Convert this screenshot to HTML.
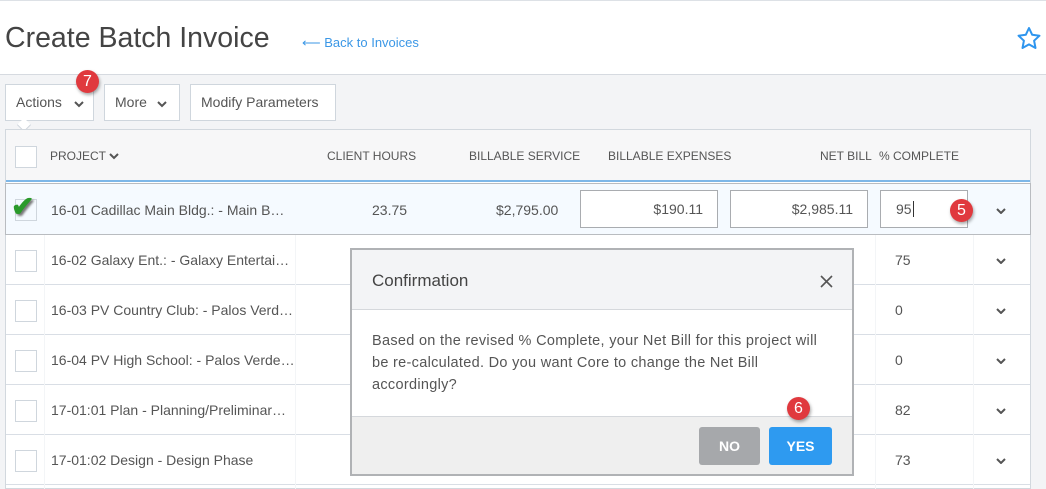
<!DOCTYPE html>
<html><head><meta charset="utf-8"><style>
*{box-sizing:border-box;margin:0;padding:0}
body{width:1046px;height:489px;overflow:hidden;background:#f3f4f6;font-family:"Liberation Sans",sans-serif;color:#555;position:relative}
.a{position:absolute}
.hdr{left:0;top:0;width:1046px;height:75px;background:#fff;border-top:1px solid #dde1e6;border-bottom:1px solid #d6dae0}
.btn{position:absolute;top:84px;height:37px;background:#fff;border:1px solid #cfd6dd;font-size:14px;color:#555;line-height:35px;padding-left:10px}
.tbl{left:5px;top:129px;width:1026px;height:360px;background:#fff;border:1px solid #d2d8de}
.th{font-size:12px;color:#555;top:149px}
.cb{position:absolute;left:15px;width:22px;height:22px;border:1px solid #cfd6dd;background:#fff}
.row{position:absolute;left:6px;width:1024px;height:50px;border-bottom:1px solid #d9dee5}
.txt{font-size:14px;color:#555}
.chev{position:absolute;width:10px;height:6px}
.badge{position:absolute;width:23px;height:23px;border-radius:50%;background:#e0393e;color:#fff;font-size:16px;text-align:center;line-height:23px;box-shadow:1px 2px 3px rgba(0,0,0,.35)}
.inp{position:absolute;top:190px;height:38px;background:#fff;border:1px solid #a9acb0;font-size:14px;line-height:36px;text-align:right;padding-right:14px;color:#555}
</style></head><body>
<div class="a hdr"></div>
<div class="a" style="left:5px;top:22px;font-size:28.5px;color:#444">Create Batch Invoice</div>
<div class="a" style="left:302px;top:35px;font-size:13px;color:#3b97e6">⟵ Back to Invoices</div>
<svg class="a" style="left:1016px;top:26px" width="26" height="25" viewBox="0 0 26 25"><path d="M13 2l3.2 6.8 7.3.9-5.4 5 1.4 7.3L13 18.4 6.5 22l1.4-7.3-5.4-5 7.3-.9z" fill="none" stroke="#2e95ee" stroke-width="2" stroke-linejoin="round"/></svg>

<div class="btn" style="left:5px;width:89px">Actions <svg style="position:absolute;left:68px;top:16px" width="10" height="7" viewBox="0 0 10 7"><path d="M1 1l4 4 4-4" fill="none" stroke="#555" stroke-width="2"/></svg></div>
<div class="a" style="left:19px;top:120px;width:10px;height:10px;background:#fff;border-right:1px solid #cfd6dd;border-bottom:1px solid #cfd6dd;transform:rotate(45deg)"></div>
<div class="btn" style="left:104px;width:76px">More <svg style="position:absolute;left:52px;top:16px" width="10" height="7" viewBox="0 0 10 7"><path d="M1 1l4 4 4-4" fill="none" stroke="#555" stroke-width="2"/></svg></div>
<div class="btn" style="left:190px;width:146px">Modify Parameters</div>
<div class="badge" style="left:76px;top:70px">7</div>

<div class="a tbl"></div>
<div class="a" style="left:6px;top:130px;width:1024px;height:52px;background:#f7f7f8;border-bottom:2px solid #7db7e8"></div>
<div class="cb" style="top:146px"></div>
<div class="a th" style="left:50px">PROJECT</div>
<svg class="a" style="left:109px;top:153px" width="10" height="7" viewBox="0 0 10 7"><path d="M1 1l4 4 4-4" fill="none" stroke="#555" stroke-width="2"/></svg>
<div class="a th" style="left:327px">CLIENT HOURS</div>
<div class="a th" style="left:469px">BILLABLE SERVICE</div>
<div class="a th" style="left:608px">BILLABLE EXPENSES</div>
<div class="a th" style="left:820px">NET BILL</div>
<div class="a th" style="left:879px">% COMPLETE</div>

<div class="a" style="left:5px;top:183px;width:1026px;height:52px;background:#f5faff;border:1px solid #b9bcc0"></div>
<div class="cb" style="top:199px;background:#f5faff"></div>
<div class="a" style="left:11px;top:190px;font-size:28px;color:#2a9a2a;text-shadow:2px 2px 2px #777;font-weight:bold">✔</div>
<div class="a txt" style="left:51px;top:202px">16-01 Cadillac Main Bldg.: - Main B…</div>
<div class="a txt" style="left:372px;top:202px">23.75</div>
<div class="a txt" style="left:496px;top:202px">$2,795.00</div>
<div class="inp" style="left:580px;width:138px">$190.11</div>
<div class="inp" style="left:730px;width:138px">$2,985.11</div>
<div class="inp" style="left:880px;width:88px;text-align:left;padding-left:15px">95<span style="border-left:1px solid #333;margin-left:1px"></span></div>
<div class="badge" style="left:950px;top:199px">5</div>
<svg class="chev" style="left:996px;top:208px" viewBox="0 0 10 6"><path d="M1 1l4 4 4-4" fill="none" stroke="#555" stroke-width="2"/></svg>

<div class="row" style="top:235px"></div>
<div class="row" style="top:285px"></div>
<div class="row" style="top:335px"></div>
<div class="row" style="top:385px"></div>
<div class="row" style="top:435px"></div>
<div class="a" style="left:44px;top:235px;width:1px;height:254px;background:#f3f5f7"></div>
<div class="a" style="left:295px;top:235px;width:1px;height:254px;background:#f3f5f7"></div>
<div class="a" style="left:875px;top:235px;width:1px;height:254px;background:#f3f5f7"></div>
<div class="a" style="left:973px;top:235px;width:1px;height:254px;background:#f3f5f7"></div>

<div class="cb" style="top:250px"></div><div class="a txt" style="left:51px;top:252px">16-02 Galaxy Ent.: - Galaxy Entertai…</div>
<div class="cb" style="top:300px"></div><div class="a txt" style="left:51px;top:302px">16-03 PV Country Club: - Palos Verd…</div>
<div class="cb" style="top:350px"></div><div class="a txt" style="left:51px;top:352px">16-04 PV High School: - Palos Verde…</div>
<div class="cb" style="top:400px"></div><div class="a txt" style="left:51px;top:402px">17-01:01 Plan - Planning/Preliminar…</div>
<div class="cb" style="top:450px"></div><div class="a txt" style="left:51px;top:452px">17-01:02 Design - Design Phase</div>

<div class="a txt" style="left:895px;top:252px">75</div>
<div class="a txt" style="left:895px;top:302px">0</div>
<div class="a txt" style="left:895px;top:352px">0</div>
<div class="a txt" style="left:895px;top:402px">82</div>
<div class="a txt" style="left:895px;top:452px">73</div>
<svg class="chev" style="left:996px;top:258px" viewBox="0 0 10 6"><path d="M1 1l4 4 4-4" fill="none" stroke="#555" stroke-width="2"/></svg>
<svg class="chev" style="left:996px;top:308px" viewBox="0 0 10 6"><path d="M1 1l4 4 4-4" fill="none" stroke="#555" stroke-width="2"/></svg>
<svg class="chev" style="left:996px;top:358px" viewBox="0 0 10 6"><path d="M1 1l4 4 4-4" fill="none" stroke="#555" stroke-width="2"/></svg>
<svg class="chev" style="left:996px;top:408px" viewBox="0 0 10 6"><path d="M1 1l4 4 4-4" fill="none" stroke="#555" stroke-width="2"/></svg>
<svg class="chev" style="left:996px;top:458px" viewBox="0 0 10 6"><path d="M1 1l4 4 4-4" fill="none" stroke="#555" stroke-width="2"/></svg>

<div class="a" style="left:350px;top:248px;width:504px;height:228px;border:2px solid #b0b2b5;background:#fff">
  <div class="a" style="left:0;top:0;width:500px;height:60px;background:#f3f4f6;border-bottom:1px solid #d5d8dc"></div>
  <div class="a" style="left:20px;top:21px;font-size:17px;color:#444">Confirmation</div>
  <svg class="a" style="left:468px;top:25px" width="13" height="13" viewBox="0 0 13 13"><path d="M1 1l11 11M12 1L1 12" stroke="#555" stroke-width="1.6"/></svg>
  <div class="a" style="left:20px;top:80px;width:480px;white-space:nowrap;font-size:14.5px;letter-spacing:0.3px;line-height:22px;color:#555">Based on the revised % Complete, your Net Bill for this project will<br>be re-calculated. Do you want Core to change the Net Bill<br>accordingly?</div>
  <div class="a" style="left:0;top:166px;width:500px;height:58px;background:#efefef;border-top:1px solid #d5d8dc"></div>
  <div class="a" style="left:347px;top:177px;width:61px;height:38px;background:#a6a8ab;border-radius:3px;color:#fff;font-size:14px;font-weight:bold;text-align:center;line-height:38px">NO</div>
  <div class="a" style="left:417px;top:177px;width:63px;height:38px;background:#2e9af0;border-radius:3px;color:#fff;font-size:14px;font-weight:bold;text-align:center;line-height:38px">YES</div>
</div>
<div class="badge" style="left:787px;top:397px">6</div>
</body></html>
